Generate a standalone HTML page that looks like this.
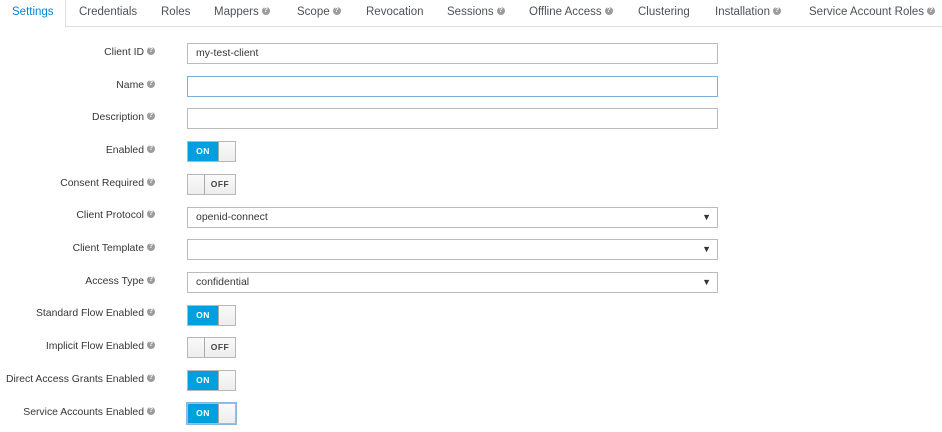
<!DOCTYPE html>
<html><head><meta charset="utf-8"><style>
*{box-sizing:border-box;margin:0;padding:0}
body{width:942px;height:432px;background:#fff;font-family:"Liberation Sans",sans-serif;font-size:11px;color:#363636;position:relative;overflow:hidden}
.tabbar{position:absolute;left:0;top:0;width:942px;height:27px;border-bottom:1px solid #ddd}
.tab{position:absolute;top:6px;font-size:11.5px;color:#4d5258;white-space:nowrap}
.act{position:absolute;left:0;top:0;width:66px;height:28px;border:1px solid #ddd;border-top:none;border-bottom:1px solid #fff;border-left:none;background:#fff}
.q{display:inline-block;width:8px;height:8px;border-radius:50%;background:#9c9c9c;color:#fff;font-size:7px;line-height:8px;text-align:center;font-weight:bold;vertical-align:middle;margin-left:3px;margin-top:-2px}
.lbl{position:absolute;right:787px;text-align:right;white-space:nowrap;font-size:10.4px;color:#363636}
.inp{position:absolute;left:187px;width:531px;height:21px;border:1px solid #bbb;background:#fff;padding-left:8px;line-height:19px;font-size:10.5px;color:#363636}
.foc{border-color:#7dafd9}
.arr{position:absolute;right:6px;top:0;font-size:9px;color:#333}
.tg{position:absolute;left:187px;width:49px;height:21px;border:1px solid #b7b7b7;background:linear-gradient(#fafafa,#ededed);font-size:8.5px;font-weight:bold;letter-spacing:.5px}
.on .b{position:absolute;left:0;top:0;width:31px;height:19px;background:#00a0e0;color:#fff;text-align:center;line-height:19px;border-right:1px solid #aaa}
.off .b{position:absolute;right:0;top:0;width:31px;height:19px;color:#444;text-align:center;line-height:19px;border-left:1px solid #aaa}
.glow{box-shadow:0 0 0 1px #8ab7df}
</style></head><body>
<div class="tabbar"></div>
<div class="act"></div>
<div class="tab" style="left:12px;color:#0088ce">Settings</div>
<div class="tab" style="left:79px">Credentials</div>
<div class="tab" style="left:161px">Roles</div>
<div class="tab" style="left:214px">Mappers<span class="q">?</span></div>
<div class="tab" style="left:297px">Scope<span class="q">?</span></div>
<div class="tab" style="left:366px">Revocation</div>
<div class="tab" style="left:447px">Sessions<span class="q">?</span></div>
<div class="tab" style="left:529px">Offline Access<span class="q">?</span></div>
<div class="tab" style="left:638px">Clustering</div>
<div class="tab" style="left:715px">Installation<span class="q">?</span></div>
<div class="tab" style="left:809px">Service Account Roles<span class="q">?</span></div>

<div class="lbl" style="top:47px">Client ID<span class="q">?</span></div>
<div class="inp" style="top:43px">my-test-client</div>
<div class="lbl" style="top:80px">Name<span class="q">?</span></div>
<div class="inp foc" style="top:76px"></div>
<div class="lbl" style="top:112px">Description<span class="q">?</span></div>
<div class="inp" style="top:108px"></div>
<div class="lbl" style="top:145px">Enabled<span class="q">?</span></div>
<div class="tg on" style="top:141px"><div class="b">ON</div></div>
<div class="lbl" style="top:178px">Consent Required<span class="q">?</span></div>
<div class="tg off" style="top:174px"><div class="b">OFF</div></div>
<div class="lbl" style="top:210px">Client Protocol<span class="q">?</span></div>
<div class="inp" style="top:207px">openid-connect<span class="arr">▼</span></div>
<div class="lbl" style="top:243px">Client Template<span class="q">?</span></div>
<div class="inp" style="top:239px"><span class="arr">▼</span></div>
<div class="lbl" style="top:276px">Access Type<span class="q">?</span></div>
<div class="inp" style="top:272px">confidential<span class="arr">▼</span></div>
<div class="lbl" style="top:308px">Standard Flow Enabled<span class="q">?</span></div>
<div class="tg on" style="top:305px"><div class="b">ON</div></div>
<div class="lbl" style="top:341px">Implicit Flow Enabled<span class="q">?</span></div>
<div class="tg off" style="top:337px"><div class="b">OFF</div></div>
<div class="lbl" style="top:374px">Direct Access Grants Enabled<span class="q">?</span></div>
<div class="tg on" style="top:370px"><div class="b">ON</div></div>
<div class="lbl" style="top:407px">Service Accounts Enabled<span class="q">?</span></div>
<div class="tg on glow" style="top:403px"><div class="b">ON</div></div>
</body></html>
